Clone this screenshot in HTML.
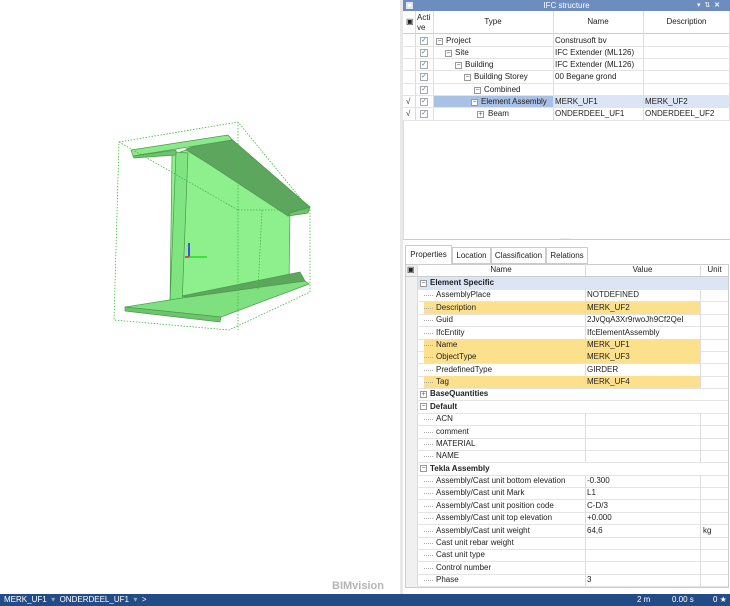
<!DOCTYPE html>
<html><head><meta charset="utf-8">
<style>
*{margin:0;padding:0;box-sizing:border-box}
body{width:730px;height:606px;position:relative;background:#fff;font-family:"Liberation Sans",Tahoma,sans-serif;font-size:8px;color:#222;overflow:hidden}
.a{position:absolute}
.t{position:absolute;white-space:nowrap;line-height:12px}
.hl{position:absolute;background:#fde08b}
.vl{position:absolute;background:#dcdcdc;width:1px}
.hr{position:absolute;background:#e4e4e4;height:1px}
.cb{position:absolute;width:8px;height:8px;border:1px solid #a8a8a8;background:#fff;font-size:7px;line-height:6px;text-align:center;color:#5577aa}
.pm{position:absolute;width:7px;height:7px;border:1px solid #999;background:#fff;font-size:7px;line-height:5px;text-align:center;color:#555}
b{font-weight:bold}
</style></head><body>

<svg class="a" style="left:0;top:0" width="403" height="594" viewBox="0 0 403 594">
<g stroke="#4a9a4a" stroke-width="0.7">
<polygon points="172,155 186,150 290,213 289,283 182,300 170,302" fill="#8df08d"/>
<polygon points="176,152 188,153 182,305 170,303" fill="#80e480"/>
<polygon points="186,149 228,136 310,207 290,213 288,216" fill="#5da65d"/>
<polygon points="131,150 228,135 232,140 133,156" fill="#8be88b"/>
<polygon points="133,156 176,150 176,155 134,158" fill="#6cc56c"/>
<polygon points="290,213 310,207 308,213 288,216" fill="#6cc56c"/>
<polygon points="182,296 300,272 305,281 190,298" fill="#5da65d"/>
<polygon points="125,307 182,298 305,281 309,284 221,317" fill="#7fe07f"/>
<polygon points="125,307 221,317 220,322 125,311" fill="#6cc56c"/>
</g>
<g fill="none" stroke="#3cb83c" stroke-width="0.8" stroke-dasharray="1.5,1.5">
<polygon points="119,142 238,122 310,210 310,292 229,330 114,320"/>
<line x1="238" y1="122" x2="238" y2="330"/>
<line x1="119" y1="142" x2="238" y2="210"/>
<line x1="238" y1="210" x2="310" y2="210"/>
<line x1="262" y1="210" x2="258" y2="290"/>
</g>
<line x1="189" y1="257" x2="189" y2="243" stroke="#2222ff" stroke-width="1.5"/>
<line x1="189" y1="257" x2="207" y2="257" stroke="#22dd22" stroke-width="1.5"/>
<line x1="185" y1="257" x2="189" y2="257" stroke="#ee2222" stroke-width="1.5"/>
<text x="332" y="589" font-family="Liberation Sans,sans-serif" font-size="11" font-weight="bold" fill="#b5b5b5">BIMvision</text>
</svg>
<div class="a" style="left:400px;top:0;width:3px;height:594px;background:#e8e8e8"></div>

<div class="a" style="left:403px;top:0;width:327px;height:11px;background:#6d8cc0"></div>
<div class="a" style="left:406px;top:2px;width:7px;height:7px;background:#fff;border:2px solid #dfe6f2"></div>
<div class="t" style="left:403px;top:0;width:327px;text-align:center;line-height:11px;color:#fff">IFC structure</div>
<div class="t" style="left:697px;top:0;line-height:11px;color:#fff;font-size:7px">▾ &nbsp;⇅ &nbsp;<b>✕</b></div>

<div class="a" style="left:403px;top:11px;width:327px;height:23px;background:#fff;border-bottom:1px solid #ccc"></div>
<div class="t" style="left:406px;top:16px">▣</div>
<div class="t" style="left:417px;top:11px;line-height:10px;padding-top:2px">Acti<br>ve</div>
<div class="t" style="left:433px;top:16px;width:120px;text-align:center">Type</div>
<div class="t" style="left:553px;top:16px;width:90px;text-align:center">Name</div>
<div class="t" style="left:643px;top:16px;width:87px;text-align:center">Description</div>

<div class="a" style="left:433px;top:96px;width:120px;height:12px;background:#a9c1e5"></div>
<div class="a" style="left:553px;top:96px;width:177px;height:12px;background:#dbe5f4"></div>

<div class="vl" style="left:415px;top:11px;height:110px"></div>
<div class="vl" style="left:433px;top:11px;height:110px"></div>
<div class="vl" style="left:553px;top:11px;height:110px"></div>
<div class="vl" style="left:643px;top:11px;height:110px"></div>
<div class="vl" style="left:729px;top:11px;height:110px"></div>
<div class="hr" style="left:403px;top:46px;width:327px"></div>
<div class="hr" style="left:403px;top:58px;width:327px"></div>
<div class="hr" style="left:403px;top:70px;width:327px"></div>
<div class="hr" style="left:403px;top:83px;width:327px"></div>
<div class="hr" style="left:403px;top:95px;width:327px"></div>
<div class="hr" style="left:403px;top:107px;width:327px"></div>
<div class="hr" style="left:403px;top:120px;width:327px"></div>

<div class="cb" style="left:420px;top:37px">✓</div>
<div class="cb" style="left:420px;top:49px">✓</div>
<div class="cb" style="left:420px;top:61px">✓</div>
<div class="cb" style="left:420px;top:73px">✓</div>
<div class="cb" style="left:420px;top:86px">✓</div>
<div class="cb" style="left:420px;top:98px">✓</div>
<div class="cb" style="left:420px;top:110px">✓</div>
<div class="t" style="left:406px;top:96px">√</div>
<div class="t" style="left:406px;top:108px">√</div>

<div class="pm" style="left:436px;top:38px">−</div><div class="t" style="left:446px;top:35px">Project</div>
<div class="pm" style="left:445px;top:50px">−</div><div class="t" style="left:455px;top:47px">Site</div>
<div class="pm" style="left:455px;top:62px">−</div><div class="t" style="left:465px;top:59px">Building</div>
<div class="pm" style="left:464px;top:74px">−</div><div class="t" style="left:474px;top:71px">Building Storey</div>
<div class="pm" style="left:474px;top:87px">−</div><div class="t" style="left:484px;top:84px">Combined</div>
<div class="pm" style="left:471px;top:99px">−</div><div class="t" style="left:481px;top:96px">Element Assembly</div>
<div class="pm" style="left:477px;top:111px">+</div><div class="t" style="left:488px;top:108px">Beam</div>

<div class="t" style="left:555px;top:35px">Construsoft bv</div>
<div class="t" style="left:555px;top:47px">IFC Extender (ML126)</div>
<div class="t" style="left:555px;top:59px">IFC Extender (ML126)</div>
<div class="t" style="left:555px;top:71px">00 Begane grond</div>
<div class="t" style="left:555px;top:96px">MERK_UF1</div>
<div class="t" style="left:555px;top:108px">ONDERDEEL_UF1</div>
<div class="t" style="left:645px;top:96px">MERK_UF2</div>
<div class="t" style="left:645px;top:108px">ONDERDEEL_UF2</div>

<div class="a" style="left:403px;top:121px;width:327px;height:119px;border-bottom:1px solid #ccc;border-left:1px solid #ddd"></div>
<div class="t" style="left:560px;top:236px;line-height:6px;font-size:6px;color:#aaa">·····</div>

<div class="a" style="left:403px;top:245px;width:327px;height:349px;background:#fff"></div>
<div class="a" style="left:405px;top:245px;width:47px;height:19px;border:1px solid #ccc;border-bottom:none;background:#fff"></div>
<div class="a" style="left:452px;top:247px;width:39px;height:17px;border:1px solid #ccc;background:#fff"></div>
<div class="a" style="left:491px;top:247px;width:55px;height:17px;border:1px solid #ccc;background:#fff"></div>
<div class="a" style="left:546px;top:247px;width:42px;height:17px;border:1px solid #ccc;background:#fff"></div>
<div class="t" style="left:405px;top:249px;width:47px;text-align:center">Properties</div>
<div class="t" style="left:452px;top:250px;width:39px;text-align:center">Location</div>
<div class="t" style="left:491px;top:250px;width:55px;text-align:center">Classification</div>
<div class="t" style="left:546px;top:250px;width:42px;text-align:center">Relations</div>

<div class="a" style="left:405px;top:264px;width:324px;height:324px;border:1px solid #ccc"></div>
<div class="a" style="left:406px;top:265px;width:11px;height:322px;background:#f0f0f0"></div>
<div class="hr" style="left:405px;top:276px;width:324px;background:#ccc"></div>
<div class="t" style="left:407px;top:264px">▣</div>
<div class="t" style="left:417px;top:264px;width:168px;text-align:center">Name</div>
<div class="t" style="left:585px;top:264px;width:115px;text-align:center">Value</div>
<div class="t" style="left:700px;top:264px;width:29px;text-align:center">Unit</div>
<div class="vl" style="left:417px;top:264px;height:324px"></div>
<div class="vl" style="left:585px;top:264px;height:12px"></div>
<div class="vl" style="left:700px;top:264px;height:12px"></div>

<div id="grid"></div>
<script>
var rows=[
["g","−","Element Specific",1],
["r","AssemblyPlace","NOTDEFINED"],
["h","Description","MERK_UF2"],
["r","Guid","2JvQqA3Xr9rwoJh9Cf2QeI"],
["r","IfcEntity","IfcElementAssembly"],
["h","Name","MERK_UF1"],
["h","ObjectType","MERK_UF3"],
["r","PredefinedType","GIRDER"],
["h","Tag","MERK_UF4"],
["g","+","BaseQuantities"],
["g","−","Default"],
["r","ACN",""],["r","comment",""],["r","MATERIAL",""],["r","NAME",""],
["g","−","Tekla Assembly"],
["r","Assembly/Cast unit bottom elevation"," -0.300"],
["r","Assembly/Cast unit Mark","L1"],
["r","Assembly/Cast unit position code","C-D/3"],
["r","Assembly/Cast unit top elevation"," +0.000"],
["r","Assembly/Cast unit weight","64,6","kg"],
["r","Cast unit rebar weight",""],
["r","Cast unit type",""],
["r","Control number",""],
["r","Phase","3"]];
var h="";
for(var i=0;i<rows.length;i++){
 var r=rows[i],y=277+i*12.375;
 if(r[0]=="g"){
  if(r[3])h+='<div class="a" style="left:418px;top:'+y+'px;width:310px;height:12px;background:#dbe5f4"></div>';
  h+='<div class="pm" style="left:420px;top:'+(y+2.5)+'px">'+r[1]+'</div><div class="t" style="left:430px;top:'+y+'px"><b>'+r[2]+'</b></div>';
 }else{
  if(r[0]=="h")h+='<div class="hl" style="left:424px;top:'+y+'px;width:276px;height:12px"></div>';
  h+='<div class="a" style="left:424px;top:'+(y+6)+'px;width:9px;border-top:1px dotted #aaa"></div>';
  h+='<div class="t" style="left:436px;top:'+y+'px">'+r[1]+'</div><div class="t" style="left:587px;top:'+y+'px">'+r[2]+'</div>';
  if(r[3])h+='<div class="t" style="left:703px;top:'+y+'px">'+r[3]+'</div>';
  h+='<div class="vl" style="left:585px;top:'+y+'px;height:12px"></div><div class="vl" style="left:700px;top:'+y+'px;height:12px"></div>';
 }
 h+='<div class="hr" style="left:417px;top:'+(y+12)+'px;width:311px"></div>';
}
document.getElementById("grid").innerHTML=h;
</script>

<div class="a" style="left:0;top:594px;width:730px;height:12px;background:#234c87"></div>
<div class="t" style="left:4px;top:594px;color:#fff">MERK_UF1 &nbsp;<span style="color:#8aa">▾</span>&nbsp; ONDERDEEL_UF1 &nbsp;<span style="color:#8aa">▾</span>&nbsp; &gt;</div>
<div class="t" style="left:637px;top:594px;color:#fff">2 m</div>
<div class="t" style="left:672px;top:594px;color:#fff">0.00 s</div>
<div class="t" style="left:713px;top:594px;color:#fff">0 ★</div>
</body></html>
